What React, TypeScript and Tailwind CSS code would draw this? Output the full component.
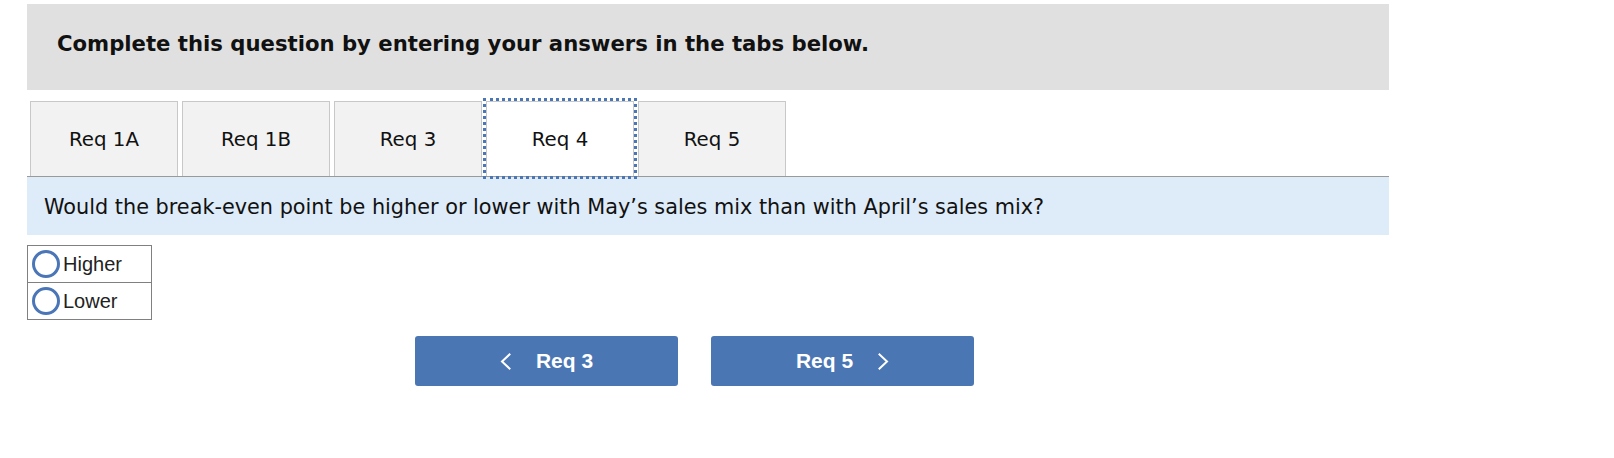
import React from "react";

const tabs = ["Req 1A", "Req 1B", "Req 3", "Req 4", "Req 5"];

function ChevronLeft() {
  return (
    <svg width="11" height="17" viewBox="0 0 11 17" fill="none">
      <polyline points="9.5,1.5 2,8.5 9.5,15.5" stroke="white" strokeWidth="2" strokeLinecap="square" />
    </svg>
  );
}

function ChevronRight() {
  return (
    <svg width="11" height="17" viewBox="0 0 11 17" fill="none">
      <polyline points="1.5,1.5 9,8.5 1.5,15.5" stroke="white" strokeWidth="2" strokeLinecap="square" />
    </svg>
  );
}

export default function App() {
  return (
    <div className="w-[1614px] h-[458px] bg-white pt-[4px] pl-[27px]">
      <div className="w-[1362px]">
        <div className="h-[86px] bg-[#e0e0e0] flex items-center pl-[30px] pb-[7px]">
          <span className="font-['DejaVu_Sans',sans-serif] font-bold text-[21.2px] text-[#111]">
            Complete this question by entering your answers in the tabs below.
          </span>
        </div>

        <div className="mt-[11px] flex gap-[4px] pl-[3px] border-b border-[#9a9a9a]">
          {tabs.map((t) => {
            const active = t === "Req 4";
            return (
              <div
                key={t}
                className={
                  active
                    ? "w-[148px] h-[75px] bg-white border border-[#c8c8c8] border-b-0 flex items-center justify-center outline-[3px] outline-dotted outline-[#4a76b5] font-['DejaVu_Sans',sans-serif] text-[19.8px] text-[#111] pt-[2px]"
                    : "w-[148px] h-[75px] bg-[#f2f2f2] border border-[#c8c8c8] border-b-0 flex items-center justify-center font-['DejaVu_Sans',sans-serif] text-[19.8px] text-[#111] pt-[2px]"
                }
              >
                {t}
              </div>
            );
          })}
        </div>

        <div className="h-[58px] bg-[#deebf8] flex items-center pl-[17px] pt-[4px]">
          <span className="font-['DejaVu_Sans',sans-serif] text-[20.8px] text-[#111]">
            Would the break-even point be higher or lower with May’s sales mix than with April’s sales mix?
          </span>
        </div>

        <div className="mt-[10px] w-[125px] border border-[#808080]">
          <div className="h-[36px] flex items-center pl-[4px]">
            <span className="w-[28px] h-[28px] rounded-full border-[3px] border-[#4a76b8] box-border shrink-0" />
            <span className="ml-[3px] font-['Liberation_Sans',Arial,sans-serif] text-[20px] text-[#222]">Higher</span>
          </div>
          <div className="h-[37px] flex items-center pl-[4px] border-t border-[#808080]">
            <span className="w-[28px] h-[28px] rounded-full border-[3px] border-[#4a76b8] box-border shrink-0" />
            <span className="ml-[3px] font-['Liberation_Sans',Arial,sans-serif] text-[20px] text-[#222]">Lower</span>
          </div>
        </div>

        <div className="mt-[16px] ml-[388px] flex gap-[33px]">
          <button className="w-[263px] h-[50px] rounded-[3px] bg-[#4a76b4] flex items-center justify-center gap-[25px] text-white font-bold text-[21px] font-['Liberation_Sans',Arial,sans-serif]">
            <ChevronLeft />
            <span>Req 3</span>
          </button>
          <button className="w-[263px] h-[50px] rounded-[3px] bg-[#4a76b4] flex items-center justify-center gap-[25px] text-white font-bold text-[21px] font-['Liberation_Sans',Arial,sans-serif]">
            <span>Req 5</span>
            <ChevronRight />
          </button>
        </div>
      </div>
    </div>
  );
}
